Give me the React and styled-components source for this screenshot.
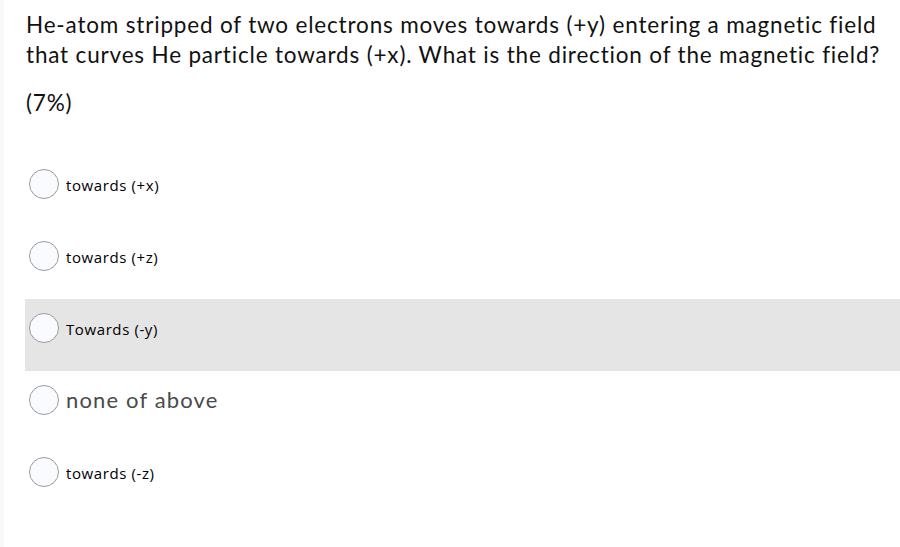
import React from 'react';
import styled, { createGlobalStyle } from 'styled-components';

const Global = createGlobalStyle`
  html, body {
    margin: 0;
    padding: 0;
    background: #fff;
  }
  body {
    font-family: Lato, "Liberation Sans", sans-serif;
    font-variant-ligatures: none;
  }
`;

const Page = styled.div`
  min-height: 547px;
  border-left: 4px solid #f8f8f8;
  padding: 10px 0 0 21px;
  box-sizing: border-box;
`;

const Question = styled.div`
  padding-left: 1px;
  font-family: Lato, sans-serif;
  font-size: 22.5px;
  letter-spacing: 0.82px;
  line-height: 30px;
  color: #111;
`;

const Para = styled.p`
  margin: 0 0 ${(p) => p.gap || 0}px;
`;

const Options = styled.div`
  display: flex;
  flex-direction: column;
  margin-top: 37px;
`;

const Row = styled.label`
  display: flex;
  align-items: flex-start;
  height: 72px;
  box-sizing: border-box;
  padding: 14px 0 0 4px;
  background: ${(p) => (p.active ? '#e5e5e5' : 'transparent')};
`;

const Radio = styled.span`
  flex: none;
  width: 28px;
  height: 28px;
  border: 1px solid #9a9a9a;
  border-radius: 50%;
  background: #f9fbff;
`;

const Label = styled.span`
  margin-left: 7px;
  line-height: 30px;
  padding-top: ${(p) => (p.big ? 0 : 1)}px;
  font-family: ${(p) => (p.big ? 'Lato, sans-serif' : '"Open Sans", "Noto Sans", sans-serif')};
  font-size: ${(p) => (p.big ? 22 : 15)}px;
  letter-spacing: ${(p) => (p.big ? 1.15 : 0.6)}px;
  color: ${(p) => (p.big ? '#4a4a4a' : '#000')};
`;

const options = [
  { text: 'towards (+x)' },
  { text: 'towards (+z)' },
  { text: 'Towards (-y)', active: true },
  { text: 'none of above', big: true },
  { text: 'towards (-z)' },
];

export default function App() {
  return (
    <Page>
      <Global />
      <Question>
        <Para gap={18}>
          He-atom stripped of two electrons moves towards (+y) entering a magnetic field
          that curves He particle towards (+x). What is the direction of the magnetic field?
        </Para>
        <Para>(7%)</Para>
      </Question>
      <Options>
        {options.map((o) => (
          <Row key={o.text} active={o.active}>
            <Radio />
            <Label big={o.big}>{o.text}</Label>
          </Row>
        ))}
      </Options>
    </Page>
  );
}
